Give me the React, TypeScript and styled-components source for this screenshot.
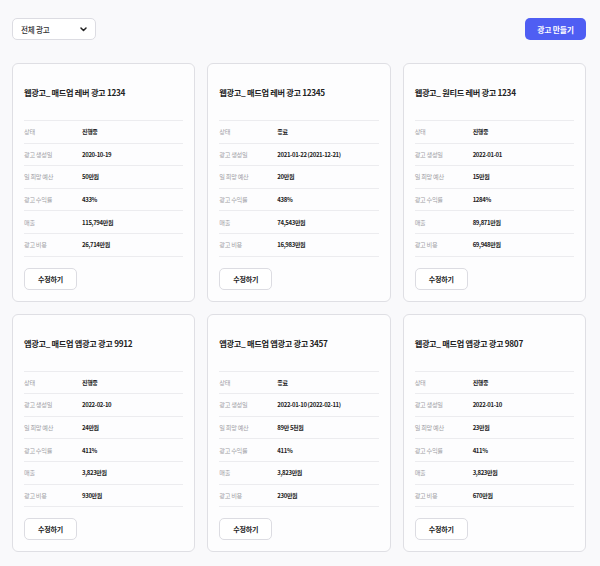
import React from "react";
import styled, { createGlobalStyle } from "styled-components";

const Global = createGlobalStyle`
  html, body { margin: 0; padding: 0; background: #f9f9fb; }
  body { font-family: "Noto Sans CJK KR", "Noto Sans", sans-serif; color: #222; }
  * { box-sizing: border-box; }
`;

const Page = styled.div`
  padding: 18px 14px 14px 12px;
  display: flex;
  flex-direction: column;
  gap: 23px;
`;

const Toolbar = styled.div`
  display: flex;
  justify-content: space-between;
  align-items: center;
`;

const Select = styled.div`
  width: 84px;
  height: 22px;
  border: 1px solid #dcdce2;
  border-radius: 5px;
  background: #fff;
  display: flex;
  align-items: center;
  justify-content: space-between;
  padding: 0 8px 0 8px;
  font-size: 7.6px;
  font-weight: 500;
  color: #333;
  letter-spacing: -0.2px;
`;

const PrimaryButton = styled.button`
  width: 61px;
  height: 22px;
  border: none;
  border-radius: 5px;
  background: #4f5ef3;
  color: #fff;
  font-family: inherit;
  font-size: 7.8px;
  font-weight: 700;
  letter-spacing: -0.2px;
  padding: 0;
`;

const Grid = styled.div`
  display: grid;
  grid-template-columns: repeat(3, 1fr);
  column-gap: 12px;
  row-gap: 12px;
`;

const Card = styled.div`
  background: #fdfdfe;
  border: 1px solid #dfdfe4;
  border-radius: 6px;
  padding: 0 11px 11px;
  display: flex;
  flex-direction: column;
`;

const Title = styled.div`
  height: 56px;
  display: flex;
  align-items: center;
  font-size: 8.2px;
  font-weight: 700;
  color: #222;
  letter-spacing: -0.3px;
`;

const Rows = styled.div`
  border-bottom: 1px solid #ececef;
`;

const Row = styled.div`
  height: 22.6px;
  border-top: 1px solid #ececef;
  display: flex;
  align-items: center;
  font-size: 6.2px;
  letter-spacing: -0.3px;
`;

const Label = styled.span`
  width: 58px;
  color: #9d9da5;
`;

const Value = styled.span`
  color: #222;
  font-weight: 700;
  font-size: 6px;
  letter-spacing: -0.35px;
`;

const EditButton = styled.button`
  margin-top: 11px;
  width: 53px;
  height: 22px;
  border: 1px solid #dcdce2;
  border-radius: 5px;
  background: #fff;
  font-family: inherit;
  font-size: 7px;
  font-weight: 700;
  color: #222;
  letter-spacing: -0.2px;
  padding: 0;
`;

type Ad = {
  title: string;
  status: string;
  created: string;
  budget: string;
  roas: string;
  sales: string;
  cost: string;
};

const ads: Ad[] = [
  { title: "웹광고_ 매드업 레버 광고 1234", status: "진행중", created: "2020-10-19", budget: "50만원", roas: "433%", sales: "115,794만원", cost: "26,714만원" },
  { title: "웹광고_ 매드업 레버 광고 12345", status: "종료", created: "2021-01-22 (2021-12-21)", budget: "20만원", roas: "438%", sales: "74,543만원", cost: "16,983만원" },
  { title: "웹광고_ 원티드 레버 광고 1234", status: "진행중", created: "2022-01-01", budget: "15만원", roas: "1284%", sales: "89,871만원", cost: "69,948만원" },
  { title: "앱광고_ 매드업 앱광고 광고 9912", status: "진행중", created: "2022-02-10", budget: "24만원", roas: "411%", sales: "3,823만원", cost: "930만원" },
  { title: "앱광고_ 매드업 앱광고 광고 3457", status: "종료", created: "2022-01-10 (2022-02-11)", budget: "89만 5천원", roas: "411%", sales: "3,823만원", cost: "230만원" },
  { title: "웹광고_ 매드업 앱광고 광고 9807", status: "진행중", created: "2022-01-10", budget: "23만원", roas: "411%", sales: "3,823만원", cost: "670만원" },
];

const Chevron = () => (
  <svg width="7" height="5" viewBox="0 0 7 5" fill="none">
    <path d="M1 1l2.5 2.5L6 1" stroke="#222" strokeWidth="1.5" strokeLinecap="round" strokeLinejoin="round" />
  </svg>
);

export default function App() {
  return (
    <>
      <Global />
      <Page>
        <Toolbar>
          <Select>
            <span>전체 광고</span>
            <Chevron />
          </Select>
          <PrimaryButton>광고 만들기</PrimaryButton>
        </Toolbar>
        <Grid>
          {ads.map((ad, i) => (
            <Card key={i}>
              <Title>{ad.title}</Title>
              <Rows>
                <Row><Label>상태</Label><Value>{ad.status}</Value></Row>
                <Row><Label>광고 생성일</Label><Value>{ad.created}</Value></Row>
                <Row><Label>일 희망 예산</Label><Value>{ad.budget}</Value></Row>
                <Row><Label>광고 수익률</Label><Value>{ad.roas}</Value></Row>
                <Row><Label>매출</Label><Value>{ad.sales}</Value></Row>
                <Row><Label>광고 비용</Label><Value>{ad.cost}</Value></Row>
              </Rows>
              <div>
                <EditButton>수정하기</EditButton>
              </div>
            </Card>
          ))}
        </Grid>
      </Page>
    </>
  );
}
